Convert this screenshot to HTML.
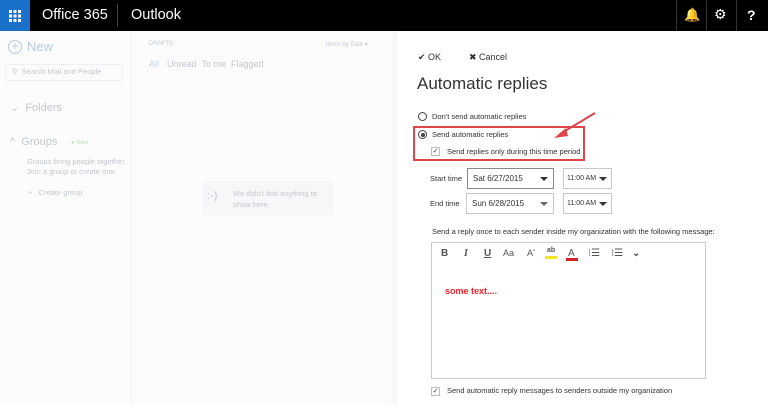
<!DOCTYPE html>
<html><head><style>
*{margin:0;padding:0;box-sizing:border-box}
body{width:768px;height:405px;overflow:hidden;background:#fcfcfd;font-family:"Liberation Sans",sans-serif;position:relative;color:#333}
.a{position:absolute;white-space:nowrap}
.top{left:0;top:0;width:768px;height:31px;background:#000}
.fade{color:#c4c8cf}
.box{position:absolute;border:1px solid #c8c8c8;background:#fff;font-size:8px;padding:0 5px;line-height:19px;white-space:nowrap}
.tm{font-size:7px;padding:0 3px}
.dd{position:absolute;right:5px;top:8px;border-left:4px solid transparent;border-right:4px solid transparent;border-top:4px solid #333}
.tb{position:absolute;top:248px;font-size:10px;color:#555;font-weight:bold}
.s{font-size:7.5px}
</style></head><body>
<div class="a top"></div>
<div class="a" style="left:0;top:0;width:30px;height:31px;background:#1a6fc9"></div>
<svg class="a" style="left:9px;top:10px" width="12" height="12"><g fill="#fff"><rect x="0" y="0" width="3" height="3"/><rect x="4.5" y="0" width="3" height="3"/><rect x="9" y="0" width="3" height="3"/><rect x="0" y="4.5" width="3" height="3"/><rect x="4.5" y="4.5" width="3" height="3"/><rect x="9" y="4.5" width="3" height="3"/><rect x="0" y="9" width="3" height="3"/><rect x="4.5" y="9" width="3" height="3"/><rect x="9" y="9" width="3" height="3"/></g></svg>
<div class="a" style="left:42px;top:7px;color:#fff;font-size:14.5px">Office 365</div>
<div class="a" style="left:117px;top:4px;width:1px;height:23px;background:#444"></div>
<div class="a" style="left:131px;top:7px;color:#fff;font-size:14.5px">Outlook</div>
<div class="a" style="left:676px;top:0;width:1px;height:31px;background:#333"></div>
<div class="a" style="left:706px;top:0;width:1px;height:31px;background:#333"></div>
<div class="a" style="left:736px;top:0;width:1px;height:31px;background:#333"></div>
<div class="a" style="left:684px;top:7px;color:#fff;font-size:13px">🔔</div>
<div class="a" style="left:714px;top:6px;color:#fff;font-size:14px">⚙</div>
<div class="a" style="left:747px;top:7px;color:#fff;font-size:14px;font-weight:bold">?</div>

<div class="a" style="left:8px;top:40px;width:14px;height:14px;border:1.5px solid #b8cbe3;border-radius:50%;color:#b8cbe3;font-size:12px;line-height:10px;text-align:center">+</div>
<div class="a" style="left:27px;top:39px;font-size:13px;color:#b8cbe3">New</div>
<div class="a" style="left:5px;top:64px;width:118px;height:17px;border:1px solid #f0f0f2"></div>
<div class="a fade" style="left:12px;top:67px;font-size:7.5px">⚲ &nbsp;Search Mail and People</div>
<div class="a fade" style="left:10px;top:101px;font-size:11px">⌄ &nbsp;Folders</div>
<div class="a fade" style="left:10px;top:136px;font-size:11px">^ &nbsp;Groups</div>
<div class="a" style="left:71px;top:140px;font-size:6px;color:#bde0bd">● New</div>
<div class="a fade" style="left:27px;top:157px;font-size:7.5px;line-height:10px">Groups bring people together.<br>Join a group or create one.</div>
<div class="a fade" style="left:28px;top:188px;font-size:7.5px">+ &nbsp;&nbsp;Create group</div>
<div class="a" style="left:131px;top:31px;width:1px;height:374px;background:#f3f3f5"></div>
<div class="a fade" style="left:149px;top:41px;font-size:6px">DRAFTS</div>
<div class="a fade" style="left:326px;top:41px;font-size:6px">Items by Date ▾</div>
<div class="a" style="left:149px;top:59px;font-size:9px;color:#c4d4ea">All</div>
<div class="a fade" style="left:167px;top:59px;font-size:9px">Unread &nbsp;To me &nbsp;Flagged</div>
<div class="a" style="left:203px;top:181px;width:130px;height:34px;background:#f7f7f9"></div>
<div class="a fade" style="left:207px;top:190px;font-size:11px">:-)</div>
<div class="a fade" style="left:233px;top:188px;font-size:7.5px;line-height:11px">We didn't find anything to<br>show here.</div>

<div class="a" style="left:397px;top:31px;width:371px;height:374px;background:#fff;box-shadow:-4px 0 6px rgba(0,0,0,.03)"></div>
<div class="a" style="left:418px;top:52px;font-size:9px;color:#333">✔ OK</div>
<div class="a" style="left:469px;top:52px;font-size:9px;color:#333">✖ Cancel</div>
<div class="a" style="left:417px;top:74px;font-size:17px;color:#333">Automatic replies</div>
<div class="a" style="left:418px;top:112px;width:9px;height:9px;border:1px solid #444;border-radius:50%"></div>
<div class="a s" style="left:432px;top:112px">Don't send automatic replies</div>
<div class="a" style="left:418px;top:130px;width:9px;height:9px;border:1px solid #444;border-radius:50%"><div style="margin:1.5px;width:4px;height:4px;background:#444;border-radius:50%"></div></div>
<div class="a s" style="left:432px;top:130px">Send automatic replies</div>
<div class="a" style="left:431px;top:147px;width:9px;height:9px;border:1px solid #bbb;font-size:7px;line-height:7px;text-align:center">✓</div>
<div class="a s" style="left:447px;top:147px">Send replies only during this time period</div>
<div class="a" style="left:413px;top:126px;width:172px;height:35px;border:2px solid #e0454a"></div>
<svg class="a" style="left:550px;top:110px" width="50" height="30"><line x1="45" y1="3" x2="10" y2="24" stroke="#e0454a" stroke-width="2"/><polygon points="4,28 16,18 18,26" fill="#e0454a"/></svg>
<div class="a s" style="left:430px;top:174px">Start time</div>
<div class="box" style="left:467px;top:168px;width:87px;height:21px;border-color:#888">Sat 6/27/2015<div class="dd"></div></div>
<div class="box tm" style="left:563px;top:168px;width:49px;height:21px">11:00 AM<div class="dd" style="right:4px"></div></div>
<div class="a s" style="left:430px;top:199px">End time</div>
<div class="box" style="left:466px;top:193px;width:88px;height:21px">Sun 6/28/2015<div class="dd" style="border-top-color:#666"></div></div>
<div class="box tm" style="left:563px;top:193px;width:49px;height:21px">11:00 AM<div class="dd" style="right:4px"></div></div>
<div class="a s" style="left:432px;top:227px">Send a reply once to each sender inside my organization with the following message:</div>
<div class="a" style="left:431px;top:242px;width:275px;height:137px;border:1px solid #ccc"></div>
<div class="tb" style="left:441px">B</div>
<div class="tb" style="left:464px;font-style:italic;font-family:'Liberation Serif',serif">I</div>
<div class="tb" style="left:484px;text-decoration:underline">U</div>
<div class="tb" style="left:503px;font-weight:normal;font-size:9px">Aa</div>
<div class="tb" style="left:527px;font-weight:normal;font-size:9px">A<sup style="font-size:5px">ᵃ</sup></div>
<div class="a" style="left:545px;top:256px;width:12px;height:3px;background:#f5e42a"></div>
<div class="tb" style="left:547px;font-size:7px;top:247px">ab</div>
<div class="tb" style="left:568px;font-weight:normal">A</div>
<div class="a" style="left:566px;top:258px;width:12px;height:3px;background:#d0202a"></div>
<div class="tb" style="left:588px;font-weight:normal">⁝☰</div>
<div class="tb" style="left:611px;font-weight:normal">⁝☰</div>
<div class="tb" style="left:632px">⌄</div>
<div class="a" style="left:445px;top:286px;font-size:9px;font-weight:bold;color:#f0202a">some text....</div>
<div class="a" style="left:431px;top:387px;width:9px;height:9px;border:1px solid #bbb;font-size:7px;line-height:7px;text-align:center">✓</div>
<div class="a s" style="left:447px;top:386px">Send automatic reply messages to senders outside my organization</div>
</body></html>
